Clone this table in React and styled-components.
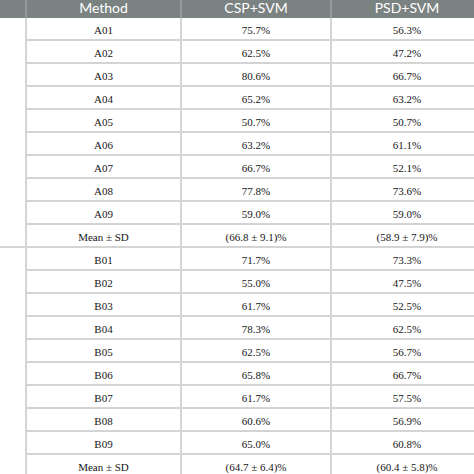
import React from "react";
import styled, { createGlobalStyle } from "styled-components";

const GlobalStyle = createGlobalStyle`
  html, body {
    margin: 0;
    padding: 0;
    background: #ffffff;
  }
  body {
    width: 474px;
    height: 474px;
    overflow: hidden;
  }
`;

const COLS = "27px 155px 150px 150px";

const Table = styled.div`
  width: 482px;
  display: flex;
  flex-direction: column;
`;

const HeaderRow = styled.div`
  display: grid;
  grid-template-columns: ${COLS};
  height: 18px;
  background: #7b8282;
`;

const HeadCell = styled.div`
  display: flex;
  justify-content: center;
  align-items: flex-start;
  color: #ffffff;
  font-family: Lato, "Open Sans", sans-serif;
  font-size: 14px;
  line-height: 15px;
  border-right: ${(p) => (p.$last ? "none" : "2px solid #949a9a")};
  box-sizing: border-box;
`;

const Group = styled.div`
  display: grid;
  grid-template-columns: ${COLS};
  border-bottom: ${(p) => (p.$last ? "none" : "2px solid #d4d4d4")};
`;

const SideCell = styled.div`
  grid-row: 1 / span ${(p) => p.$span};
  border-right: 2px solid #d4d4d4;
`;

const Cell = styled.div`
  height: ${(p) => (p.$end ? "21px" : "23px")};
  box-sizing: border-box;
  display: flex;
  align-items: center;
  justify-content: center;
  padding-top: 2px;
  font-family: "Liberation Serif", "Times New Roman", serif;
  font-size: 11px;
  color: #161616;
  border-bottom: ${(p) => (p.$end ? "none" : "2px solid #d4d4d4")};
  border-right: ${(p) => (p.$last ? "none" : "2px solid #d4d4d4")};
`;

const groups = [
  [
    ["A01", "75.7%", "56.3%"],
    ["A02", "62.5%", "47.2%"],
    ["A03", "80.6%", "66.7%"],
    ["A04", "65.2%", "63.2%"],
    ["A05", "50.7%", "50.7%"],
    ["A06", "63.2%", "61.1%"],
    ["A07", "66.7%", "52.1%"],
    ["A08", "77.8%", "73.6%"],
    ["A09", "59.0%", "59.0%"],
    ["Mean ± SD", "(66.8 ± 9.1)%", "(58.9 ± 7.9)%"],
  ],
  [
    ["B01", "71.7%", "73.3%"],
    ["B02", "55.0%", "47.5%"],
    ["B03", "61.7%", "52.5%"],
    ["B04", "78.3%", "62.5%"],
    ["B05", "62.5%", "56.7%"],
    ["B06", "65.8%", "66.7%"],
    ["B07", "61.7%", "57.5%"],
    ["B08", "60.6%", "56.9%"],
    ["B09", "65.0%", "60.8%"],
    ["Mean ± SD", "(64.7 ± 6.4)%", "(60.4 ± 5.8)%"],
  ],
];

function App() {
  return (
    <>
      <GlobalStyle />
      <Table>
        <HeaderRow>
          <HeadCell />
          <HeadCell>Method</HeadCell>
          <HeadCell>CSP+SVM</HeadCell>
          <HeadCell $last>PSD+SVM</HeadCell>
        </HeaderRow>
        {groups.map((rows, g) => (
          <Group key={g} $last={g === groups.length - 1}>
            <SideCell $span={rows.length} />
            {rows.map((r, i) => {
              const end = i === rows.length - 1;
              return (
                <React.Fragment key={r[0] + i}>
                  <Cell $end={end}>{r[0]}</Cell>
                  <Cell $end={end}>{r[1]}</Cell>
                  <Cell $end={end} $last>
                    {r[2]}
                  </Cell>
                </React.Fragment>
              );
            })}
          </Group>
        ))}
      </Table>
    </>
  );
}

export default App;
